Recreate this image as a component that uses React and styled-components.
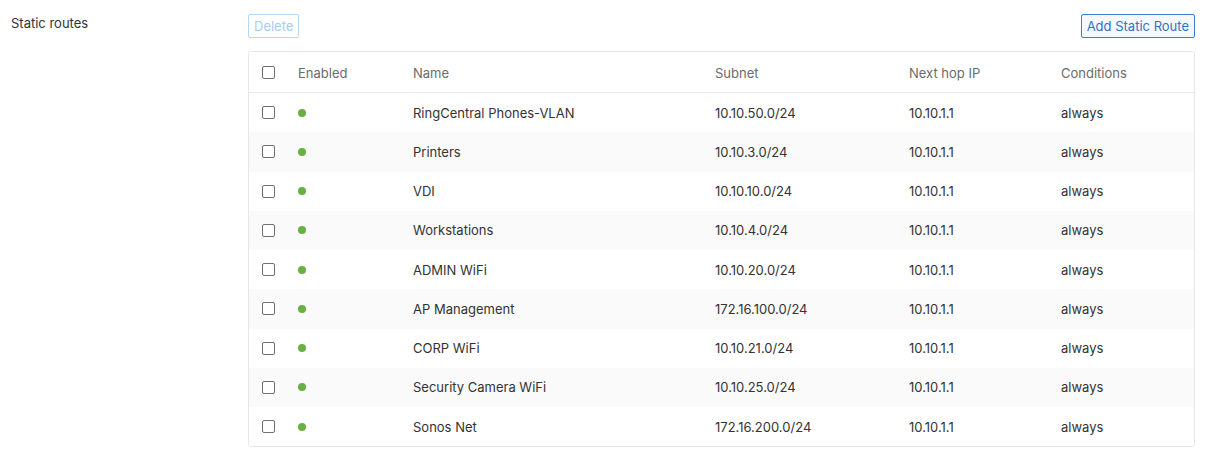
import React from 'react';
import styled, { createGlobalStyle } from 'styled-components';

const Global = createGlobalStyle`
  body {
    margin: 0;
    background: #fff;
    font-family: Inter, "Noto Sans", sans-serif;
    font-size: 13px;
    color: #333;
  }
`;

const Section = styled.section`
  display: grid;
  grid-template-columns: 237px 947px;
  padding: 14px 0 0 11px;
`;

const Label = styled.div`
  line-height: 18px;
  color: #333;
`;

const Toolbar = styled.div`
  display: flex;
  justify-content: space-between;
  margin-bottom: 13px;
`;

const Button = styled.button`
  height: 24px;
  padding: 0 5px;
  font-family: inherit;
  font-size: 13px;
  border-radius: 2px;
  border: 1px solid ${({ disabled }) => (disabled ? '#b8d6f6' : '#3b7fd4')};
  color: ${({ disabled }) => (disabled ? '#a9cbf2' : '#3571c4')};
  background: ${({ disabled }) => (disabled ? '#fff' : '#f5f9fe')};
`;

const Table = styled.div`
  border: 1px solid #e6e6e6;
  border-radius: 3px;
  overflow: hidden;
`;

const Row = styled.div`
  display: grid;
  grid-template-columns: 49px 115px 302px 194px 152px 1fr;
  align-items: center;
  height: ${({ head }) => (head ? '40px' : '39.25px')};
  background: ${({ striped }) => (striped ? '#fafafa' : '#fff')};
  border-bottom: ${({ head }) => (head ? '1px solid #e8e8e8' : 'none')};
  color: ${({ head }) => (head ? '#6b6b6b' : '#333')};
`;

const Cell = styled.div`
  white-space: nowrap;
  padding-top: ${({ head }) => (head ? '2px' : '0')};
  &:first-child {
    padding-top: 0;
    padding-left: 13px;
    display: flex;
  }
`;

const Check = styled.input.attrs({ type: 'checkbox' })`
  appearance: none;
  margin: 0;
  width: 13px;
  height: 13px;
  border: 1px solid #707070;
  border-radius: 2px;
  background: #fff;
`;

const Dot = styled.span`
  display: block;
  width: 8px;
  height: 8px;
  border-radius: 50%;
  background: #67b144;
`;

const routes = [
  ['RingCentral Phones-VLAN', '10.10.50.0/24'],
  ['Printers', '10.10.3.0/24'],
  ['VDI', '10.10.10.0/24'],
  ['Workstations', '10.10.4.0/24'],
  ['ADMIN WiFi', '10.10.20.0/24'],
  ['AP Management', '172.16.100.0/24'],
  ['CORP WiFi', '10.10.21.0/24'],
  ['Security Camera WiFi', '10.10.25.0/24'],
  ['Sonos Net', '172.16.200.0/24'],
];

const headers = ['Enabled', 'Name', 'Subnet', 'Next hop IP', 'Conditions'];

export default function App() {
  return (
    <>
      <Global />
      <Section>
        <Label>Static routes</Label>
        <div>
          <Toolbar>
            <Button disabled>Delete</Button>
            <Button>Add Static Route</Button>
          </Toolbar>
          <Table>
            <Row head>
              <Cell><Check /></Cell>
              {headers.map((h) => (
                <Cell head key={h}>{h}</Cell>
              ))}
            </Row>
            {routes.map(([name, subnet], i) => (
              <Row key={name} striped={i % 2 === 1}>
                <Cell><Check /></Cell>
                <Cell><Dot /></Cell>
                <Cell>{name}</Cell>
                <Cell>{subnet}</Cell>
                <Cell>10.10.1.1</Cell>
                <Cell>always</Cell>
              </Row>
            ))}
          </Table>
        </div>
      </Section>
    </>
  );
}
